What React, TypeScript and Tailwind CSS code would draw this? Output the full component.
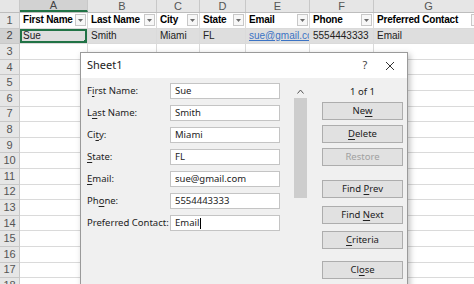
import React from 'react';

const COLS = [
  { key: 'A', w: 68 },
  { key: 'B', w: 69 },
  { key: 'C', w: 43 },
  { key: 'D', w: 46 },
  { key: 'E', w: 64 },
  { key: 'F', w: 64 },
  { key: 'G', w: 110 },
];

const HEADERS = ['First Name', 'Last Name', 'City', 'State', 'Email', 'Phone', 'Preferred Contact'];
const ROW2 = ['Sue', 'Smith', 'Miami', 'FL', 'sue@gmail.com', '5554443333', 'Email'];

const FilterButton: React.FC = () => (
  <div className="absolute right-[1px] top-[1px] w-[11px] h-[12px] border border-[#c8c8c8] bg-[#f7f7f7] flex items-center justify-center">
    <svg width="5" height="3" viewBox="0 0 5 3">
      <path d="M0 0 L5 0 L2.5 3 Z" fill="#6b6b6b" />
    </svg>
  </div>
);

const Spreadsheet: React.FC = () => {
  const rows = Array.from({ length: 18 }, (_, i) => i + 1);
  return (
    <div className="w-[474px] h-[284px] overflow-hidden bg-white" style={{ fontFamily: '"Liberation Sans", Arial, sans-serif' }}>
      {/* column letters */}
      <div className="flex h-[13px] bg-[#e6e6e6] border-b border-[#bdbdbd]">
        <div className="w-[20px] shrink-0 border-r border-[#c8c8c8]" />
        {COLS.map((c) => (
          <div
            key={c.key}
            style={{ width: c.w }}
            className={`shrink-0 border-r border-[#c8c8c8] flex items-center justify-center text-[11px] leading-none ${
              c.key === 'A' ? 'bg-[#d2d2d2] text-[#444] border-b-2 border-b-[#217346]' : 'text-[#555]'
            }`}
          >
            {c.key}
          </div>
        ))}
      </div>
      {rows.map((r) => (
        <div key={r} className="flex h-[15.6px]">
          <div
            className={`w-[20px] shrink-0 border-r border-b border-[#c8c8c8] flex items-center justify-center text-[11px] leading-none ${
              r === 2 ? 'bg-[#d2d2d2] text-[#444]' : 'bg-[#e6e6e6] text-[#555]'
            }`}
          >
            {r}
          </div>
          {COLS.map((c, i) => {
            const isHead = r === 1;
            const isData = r === 2;
            const selected = isData && i === 0;
            return (
              <div
                key={c.key}
                style={{ width: c.w }}
                className={`relative shrink-0 border-r border-b border-[#dadada] flex items-center overflow-hidden whitespace-nowrap text-[10px] leading-none pl-[3px] ${
                  isData ? 'bg-[#dedede]' : 'bg-white'
                } ${isHead ? 'font-bold text-black tracking-[-0.2px]' : 'text-[#222]'}`}
              >
                {isHead && (
                  <>
                    <span>{HEADERS[i]}</span>
                    <FilterButton />
                  </>
                )}
                {isData && (
                  <span className={i === 4 ? 'text-[#3b73c4] underline' : ''}>{ROW2[i]}</span>
                )}
                {selected && (
                  <>
                    <div className="absolute inset-0 border-2 border-[#217346]" />
                    <div className="absolute right-[-1px] bottom-[-1px] w-[4px] h-[4px] bg-[#217346]" />
                  </>
                )}
              </div>
            );
          })}
        </div>
      ))}
    </div>
  );
};

const Mn: React.FC<{ children: React.ReactNode }> = ({ children }) => (
  <span className="underline underline-offset-[1.5px]">{children}</span>
);

const fields: { label: React.ReactNode; value: string; caret?: boolean }[] = [
  { label: <>F<Mn>i</Mn>rst Name:</>, value: 'Sue' },
  { label: <>L<Mn>a</Mn>st Name:</>, value: 'Smith' },
  { label: <>Ci<Mn>t</Mn>y:</>, value: 'Miami' },
  { label: <><Mn>S</Mn>tate:</>, value: 'FL' },
  { label: <><Mn>E</Mn>mail:</>, value: 'sue@gmail.com' },
  { label: <>Ph<Mn>o</Mn>ne:</>, value: '5554443333' },
  { label: <>Preferred Contact:</>, value: 'Email', caret: true },
];

const Btn: React.FC<{ children: React.ReactNode; disabled?: boolean; className?: string }> = ({ children, disabled, className }) => (
  <div
    className={`w-[81px] h-[18px] bg-[#e1e1e1] border border-[#adadad] flex items-center justify-center text-[9.5px] ${
      disabled ? 'text-[#a0a0a0]' : 'text-[#222]'
    } ${className ?? ''}`}
  >
    <span>{children}</span>
  </div>
);

const DataForm: React.FC = () => (
  <div
    className="absolute left-[80px] top-[52px] w-[328px] h-[250px] bg-[#f0f0f0] border border-[#9a9a9a] shadow-[2px_2px_6px_rgba(0,0,0,0.25)]"
    style={{ fontFamily: '"Noto Sans", "Open Sans", sans-serif' }}
  >
    {/* title bar */}
    <div className="h-[25px] bg-white flex items-center pl-[6px] text-[11px] text-[#222]">
      <span className="flex-1">Sheet1</span>
      <span className="w-[20px] text-center text-[11px] text-[#444]">?</span>
      <span className="w-[30px] flex items-center justify-center mr-[2px]">
        <svg width="10" height="10" viewBox="0 0 10 10">
          <path d="M1 1 L9 9 M9 1 L1 9" stroke="#333" strokeWidth="1" />
        </svg>
      </span>
    </div>
    <div className="flex">
      {/* fields */}
      <div className="pl-[6px] pt-[5px] flex flex-col gap-[6px]">
        {fields.map((f, i) => (
          <div key={i} className="flex items-center h-[16px]">
            <div className="w-[83px] text-[9.5px] text-[#222] whitespace-nowrap">{f.label}</div>
            <div className="w-[110px] h-[16px] bg-white border border-[#c4c4c4] flex items-center pl-[4px] text-[9.5px] text-[#222]">
              {f.value}
              {f.caret && <span className="w-[1px] h-[11px] bg-black ml-[1px]" />}
            </div>
          </div>
        ))}
      </div>
      {/* scrollbar */}
      <div className="ml-[14px] w-[13px] flex flex-col items-center">
        <div className="h-[20px] flex items-center justify-center pt-[6px]">
          <svg width="7" height="5" viewBox="0 0 7 5">
            <path d="M0.5 4.5 L3.5 1 L6.5 4.5" stroke="#555" strokeWidth="1" fill="none" />
          </svg>
        </div>
        <div className="w-[13px] h-[100px] bg-[#cdcdcd]" />
      </div>
      {/* buttons */}
      <div className="ml-[15px] pt-[4px] flex flex-col">
        <div className="h-[20px] flex items-center justify-center text-[9.5px] text-[#222]">1 of 1</div>
        <Btn>Ne<Mn>w</Mn></Btn>
        <Btn className="mt-[5px]"><Mn>D</Mn>elete</Btn>
        <Btn className="mt-[5px]" disabled>Restore</Btn>
        <Btn className="mt-[14px]">Find <Mn>P</Mn>rev</Btn>
        <Btn className="mt-[8px]">Find <Mn>N</Mn>ext</Btn>
        <Btn className="mt-[7px]"><Mn>C</Mn>riteria</Btn>
        <Btn className="mt-[12px]">Cl<Mn>o</Mn>se</Btn>
      </div>
    </div>
  </div>
);

export default function App() {
  return (
    <div className="relative w-[474px] h-[284px] overflow-hidden">
      <Spreadsheet />
      <DataForm />
    </div>
  );
}
